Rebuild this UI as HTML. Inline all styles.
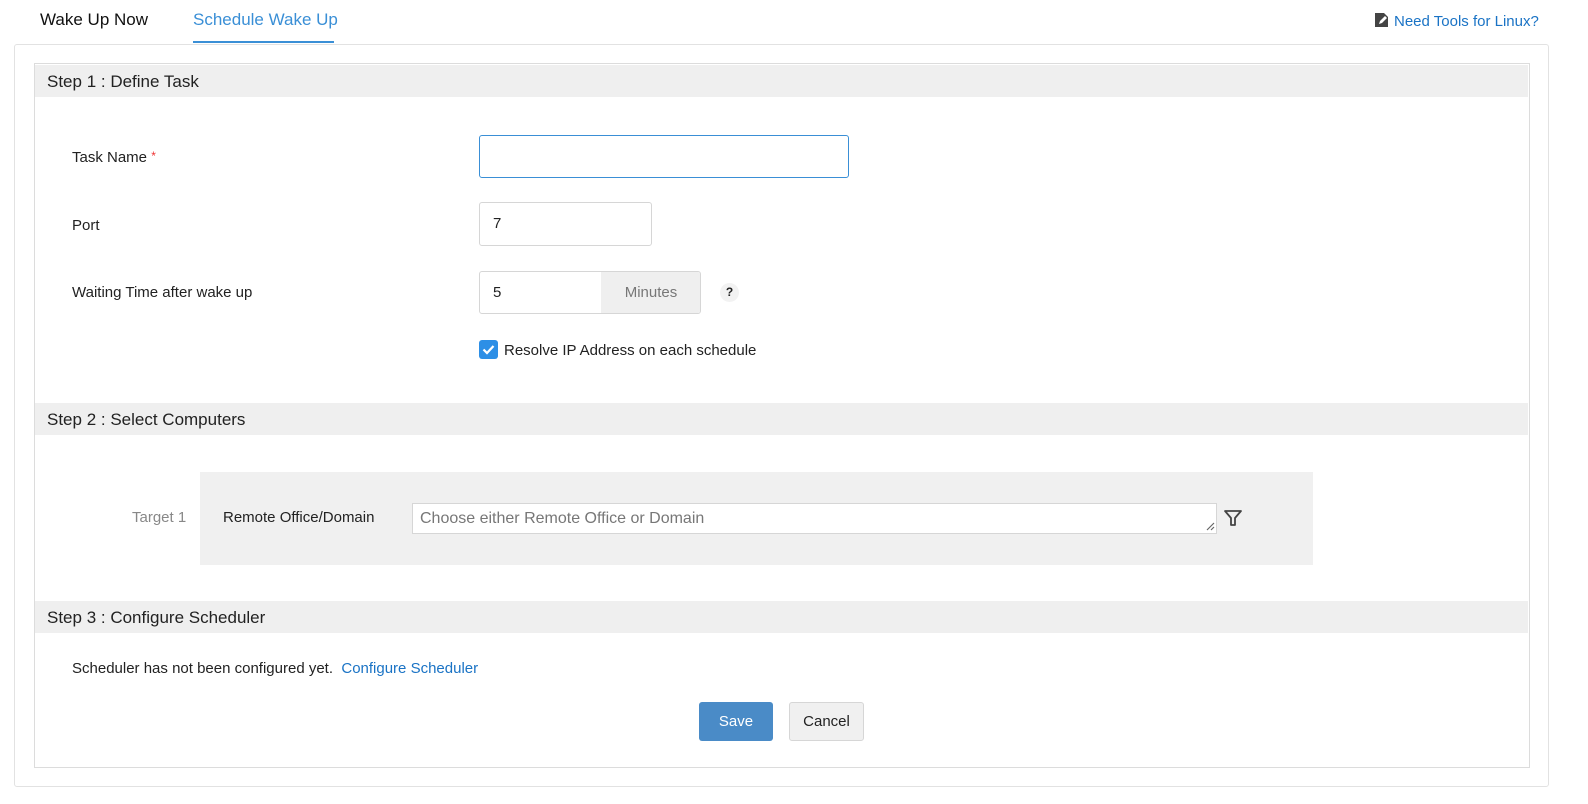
<!DOCTYPE html>
<html><head><meta charset="utf-8"><style>
*{box-sizing:border-box;margin:0;padding:0}
body{width:1588px;height:804px;background:#fff;font-family:"Liberation Sans",sans-serif;color:#222;position:relative;overflow:hidden;font-size:15px}
.a{position:absolute}
.hdr{position:absolute;left:35px;width:1493px;height:32px;background:#efefef;font-size:17px;padding-left:12px;line-height:34px;color:#222}
.lbl{position:absolute;left:72px;font-size:15px}
.inp{position:absolute;background:#fff;border:1px solid #d6d6d6;border-radius:3px;font-size:15px;padding-left:13px}
</style></head><body>
<div class="a" style="left:40px;top:10px;font-size:17px;color:#111">Wake Up Now</div>
<div class="a" style="left:193px;top:10px;font-size:17px;color:#3a8fd6">Schedule Wake Up</div>
<div class="a" style="left:193px;top:41px;width:141px;height:2px;background:#3a8fd6"></div>
<svg class="a" style="left:1375px;top:11px" width="14" height="16" viewBox="0 0 14 16"><path d="M0 2h9l4 4v10H0z" fill="#444"/><path d="M4 13l1-3 5-5 2 2-5 5z" fill="#fff"/></svg>
<div class="a" style="left:1394px;top:13px;font-size:15px;color:#1a73c5">Need Tools for Linux?</div>
<div class="a" style="left:14px;top:44px;width:1535px;height:743px;border:1px solid #e2e2e2;border-radius:3px"></div>
<div class="a" style="left:34px;top:63px;width:1496px;height:705px;border:1px solid #dcdcdc"></div>
<div class="hdr" style="top:65px">Step 1 : Define Task</div>
<div class="lbl" style="top:149px">Task Name <span style="color:#e33;font-size:12px;vertical-align:top">*</span></div>
<div class="inp" style="left:479px;top:135px;width:370px;height:43px;border-color:#3a8fd6"></div>
<div class="lbl" style="top:217px">Port</div>
<div class="inp" style="left:479px;top:202px;width:173px;height:44px;line-height:42px">7</div>
<div class="lbl" style="top:284px">Waiting Time after wake up</div>
<div class="inp" style="left:479px;top:271px;width:222px;height:43px;line-height:41px;overflow:hidden">5<div class="a" style="left:121px;top:0;width:100px;height:41px;background:#efefef;color:#777;text-align:center">Minutes</div></div>
<div class="a" style="left:720px;top:283px;width:19px;height:19px;border-radius:50%;background:#f2f2f2;font-size:12px;font-weight:bold;text-align:center;line-height:19px">?</div>
<div class="a" style="left:479px;top:340px;width:19px;height:19px;border-radius:3px;background:#2d8fe6"><svg width="19" height="19"><path d="M4.5 9.5l3.5 3.5 6.5-7" stroke="#fff" stroke-width="2.2" fill="none"/></svg></div>
<div class="a" style="left:504px;top:342px;font-size:15px">Resolve IP Address on each schedule</div>
<div class="hdr" style="top:403px">Step 2 : Select Computers</div>
<div class="a" style="left:200px;top:472px;width:1113px;height:93px;background:#f0f0f0"></div>
<div class="a" style="left:132px;top:509px;color:#888">Target 1</div>
<div class="a" style="left:223px;top:509px">Remote Office/Domain</div>
<div class="inp" style="left:412px;top:503px;width:805px;height:31px;line-height:29px;color:#777;border-radius:0;padding-left:7px;font-size:16px">Choose either Remote Office or Domain</div>
<svg class="a" style="left:1204px;top:520px" width="11" height="11"><path d="M3 10l7-7M7 10l3-3" stroke="#666" stroke-width="1.2"/></svg>
<svg class="a" style="left:1223px;top:508px" width="20" height="20" viewBox="0 0 20 20"><path d="M2 3h16l-6 7v7h-4v-7z" fill="none" stroke="#444" stroke-width="1.8" stroke-linejoin="round"/></svg>
<div class="hdr" style="top:601px">Step 3 : Configure Scheduler</div>
<div class="a" style="left:72px;top:660px">Scheduler has not been configured yet.&nbsp;&nbsp;<span style="color:#1a73c5">Configure Scheduler</span></div>
<div class="a" style="left:699px;top:702px;width:74px;height:39px;background:#4a8bc7;border-radius:3px;color:#fff;text-align:center;line-height:39px">Save</div>
<div class="a" style="left:789px;top:702px;width:75px;height:39px;background:#f0f0f0;border:1px solid #d6d6d6;border-radius:3px;text-align:center;line-height:37px">Cancel</div>
</body></html>
